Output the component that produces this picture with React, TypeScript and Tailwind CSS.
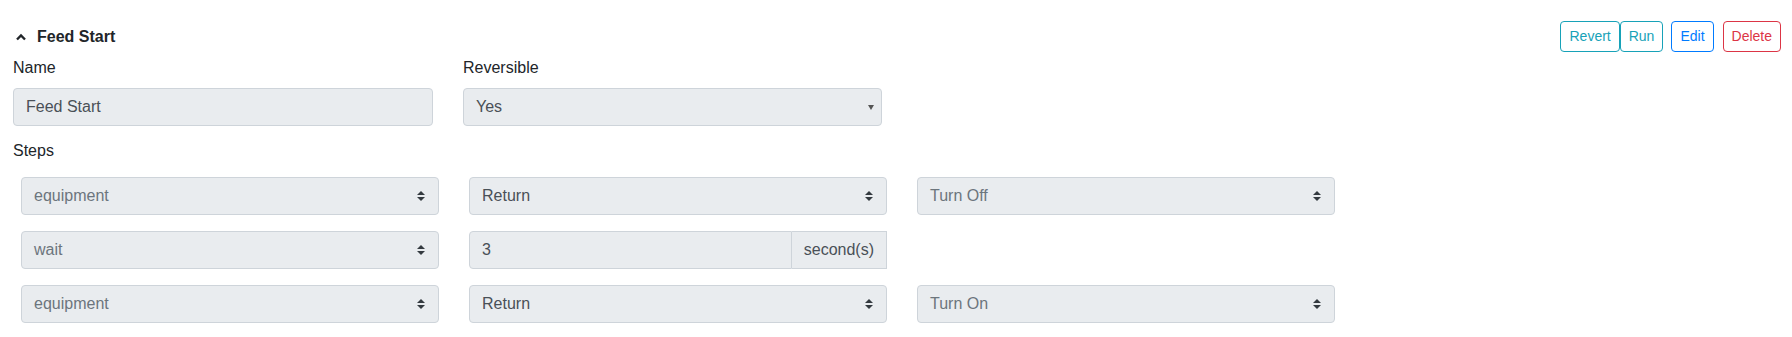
const UpDown = () => (
  <svg viewBox="0 0 4 5" className="w-[8px] h-[10px]" fill="#343a40">
    <path d="M2 0L0 2h4zm0 5L0 3h4z" />
  </svg>
)

function StepSelect({ value, muted }: { value: string; muted?: boolean }) {
  return (
    <div className="w-[418px] h-[38px] flex items-center justify-between pl-[12px] pr-[13px] bg-[#e9ecef] border border-[#ced4da] rounded">
      <span className={muted ? "text-[#6c757d]" : "text-[#495057]"}>{value}</span>
      <UpDown />
    </div>
  )
}

export default function App() {
  return (
    <div className="w-full h-[337px] overflow-hidden bg-white text-[#212529] text-[16px] leading-6 font-['Liberation_Sans',Arial,sans-serif]">
      <div className="flex items-center justify-between h-[31px] mt-[21px] pl-[16px] pr-[11px]">
        <div className="flex items-center gap-[11px]">
          <svg viewBox="0 0 10 8" className="w-[10px] h-[8px]" fill="none" stroke="#212529" strokeWidth="2.4">
            <polyline points="1,6.5 5,2.5 9,6.5" />
          </svg>
          <span className="font-bold">Feed Start</span>
        </div>
        <div className="flex items-center text-[14px] leading-[21px]">
          <button className="px-[8px] py-[4px] border border-[#17a2b8] text-[#17a2b8] rounded">Revert</button>
          <button className="px-[8px] py-[4px] border border-[#17a2b8] text-[#17a2b8] rounded">Run</button>
          <button className="ml-[8px] px-[8px] py-[4px] border border-[#007bff] text-[#007bff] rounded">Edit</button>
          <button className="ml-[9px] px-[8px] py-[4px] border border-[#dc3545] text-[#dc3545] rounded">Delete</button>
        </div>
      </div>

      <div className="flex gap-[30px] pl-[13px] mt-[4px]">
        <div className="w-[420px]">
          <div className="mb-[8px]">Name</div>
          <div className="h-[38px] flex items-center px-[12px] bg-[#e9ecef] border border-[#ced4da] rounded text-[#495057]">
            Feed Start
          </div>
        </div>
        <div className="w-[419px]">
          <div className="mb-[8px]">Reversible</div>
          <div className="h-[38px] flex items-center justify-between pl-[12px] pr-[7px] bg-[#e9ecef] border border-[#ced4da] rounded text-[#495057]">
            <span>Yes</span>
            <svg viewBox="0 0 6 5" className="w-[6px] h-[5px]" fill="#555">
              <path d="M0 0h6L3 5z" />
            </svg>
          </div>
        </div>
      </div>

      <div className="pl-[13px] mt-[13px]">Steps</div>

      <div className="flex flex-col gap-[16px] pl-[21px] mt-[14px]">
        <div className="flex gap-[30px]">
          <StepSelect value="equipment" muted />
          <StepSelect value="Return" />
          <StepSelect value="Turn Off" muted />
        </div>
        <div className="flex gap-[30px]">
          <StepSelect value="wait" muted />
          <div className="w-[418px] h-[38px] flex text-[#495057]">
            <div className="flex-1 flex items-center px-[12px] bg-[#e9ecef] border border-[#ced4da] rounded-l">3</div>
            <div className="flex items-center px-[12px] bg-[#e9ecef] border border-l-0 border-[#ced4da]">second(s)</div>
          </div>
        </div>
        <div className="flex gap-[30px]">
          <StepSelect value="equipment" muted />
          <StepSelect value="Return" />
          <StepSelect value="Turn On" muted />
        </div>
      </div>
    </div>
  )
}
